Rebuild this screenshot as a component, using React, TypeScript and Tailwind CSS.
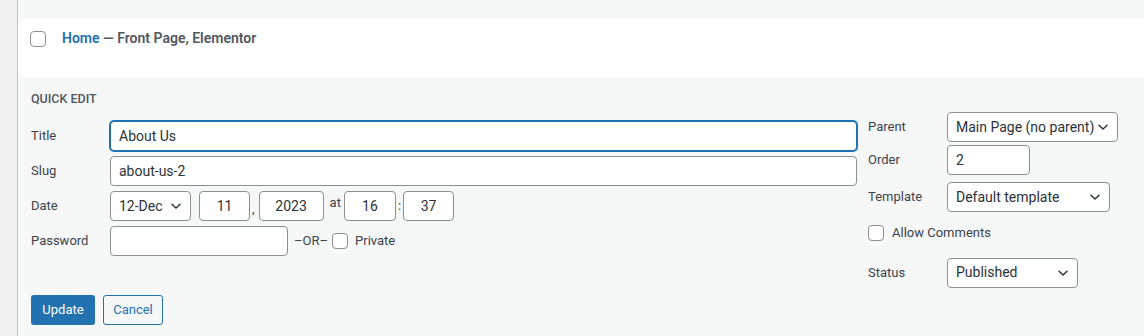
import React from "react";

const Chevron = () => (
  <svg width="12" height="12" viewBox="0 0 12 12" className="shrink-0">
    <path d="M2 4.2 L6 8 L10 4.2" fill="none" stroke="#2c3338" strokeWidth="1.5" strokeLinecap="round" strokeLinejoin="round" />
  </svg>
);

const Checkbox = () => (
  <span className="inline-block w-[16px] h-[16px] rounded-[4px] border border-[#8c8f94] bg-white shrink-0" />
);

const Select = ({ text, w }: { text: string; w: string }) => (
  <div className={`${w} h-[30px] flex items-center justify-between pl-[8px] pr-[8px] bg-white border border-[#8c8f94] rounded-[4px] text-[14px] text-[#2c3338]`}>
    <span className="whitespace-nowrap">{text}</span>
    <Chevron />
  </div>
);

const Input = ({ text, w, center, focus }: { text?: string; w: string; center?: boolean; focus?: boolean }) => (
  <div
    className={`${w} h-[30px] flex items-center px-[8px] bg-white rounded-[4px] text-[14px] text-[#2c3338] ${
      center ? "justify-center" : ""
    } ${focus ? "border border-[#2271b1] shadow-[0_0_0_1px_#2271b1]" : "border border-[#8c8f94]"}`}
  >
    {text}
  </div>
);

const Label = ({ children }: { children: React.ReactNode }) => (
  <div className="w-[79px] shrink-0 text-[13px] text-[#3c434a]">{children}</div>
);

export default function App() {
  return (
    <div
      className="flex w-[1144px] h-[336px] overflow-hidden bg-[#f6f7f7] text-[#3c434a]"
      style={{ fontFamily: '"Segoe UI", Roboto, "Noto Sans", sans-serif' }}
    >
      <div className="w-[18px] shrink-0 bg-[#f0f0f1] border-r border-[#c3c4c7]" />
      <div className="flex-1 flex flex-col">
        <div className="h-[19px] bg-[#f6f7f7]" />
        <div className="h-[58px] bg-white flex items-start pt-[11px]">
          <div className="ml-[12px]">
            <Checkbox />
          </div>
          <div className="ml-[16px] text-[14px] font-semibold leading-[16px] text-[#50575e]">
            <span className="text-[#2271b1]">Home</span> — Front Page, Elementor
          </div>
        </div>
        <div className="flex-1 flex flex-col pl-[13px] pt-[14px]">
          <div className="text-[12.5px] leading-[16px] font-medium text-[#50575e] uppercase">Quick Edit</div>
          <div className="flex items-start">
            <div className="w-[826px] mt-[14px] flex flex-col gap-[5px]">
              <div className="flex items-center">
                <Label>Title</Label>
                <Input text="About Us" w="flex-1" focus />
              </div>
              <div className="flex items-center">
                <Label>Slug</Label>
                <Input text="about-us-2" w="flex-1" />
              </div>
              <div className="flex items-center text-[13px]">
                <Label>Date</Label>
                <Select text="12-Dec" w="w-[81px]" />
                <div className="ml-[8px]">
                  <Input text="11" w="w-[51px]" center />
                </div>
                <span className="ml-[2px] mr-[4px] mt-[6px] text-[#3c434a]">,</span>
                <Input text="2023" w="w-[65px]" center />
                <span className="ml-[6px] mr-[3px] -mt-[6px] text-[#3c434a]">at</span>
                <Input text="16" w="w-[52px]" center />
                <span className="mx-[2px] text-[#3c434a]">:</span>
                <Input text="37" w="w-[51px]" center />
              </div>
              <div className="flex items-center text-[13px]">
                <Label>Password</Label>
                <Input w="w-[178px]" />
                <span className="ml-[6px] text-[#3c434a]">–OR–</span>
                <span className="ml-[4px] flex">
                  <Checkbox />
                </span>
                <span className="ml-[7px] text-[#3c434a]">Private</span>
              </div>
            </div>
            <div className="ml-[11px] mt-[5px] flex flex-col">
              <div className="flex items-center">
                <Label>Parent</Label>
                <Select text="Main Page (no parent)" w="w-[171px]" />
              </div>
              <div className="flex items-center mt-[3px]">
                <Label>Order</Label>
                <Input text="2" w="w-[83px]" />
              </div>
              <div className="flex items-center mt-[7px]">
                <Label>Template</Label>
                <Select text="Default template" w="w-[163px]" />
              </div>
              <div className="flex items-center mt-[11px] text-[13px]">
                <Checkbox />
                <span className="ml-[8px]">Allow Comments</span>
              </div>
              <div className="flex items-center mt-[15px]">
                <Label>Status</Label>
                <Select text="Published" w="w-[131px]" />
              </div>
            </div>
          </div>
          <div className="flex mt-[7px] gap-[8px]">
            <div className="w-[64px] h-[30px] rounded-[3px] bg-[#2271b1] text-white text-[13px] flex items-center justify-center">
              Update
            </div>
            <div className="w-[60px] h-[30px] rounded-[3px] border border-[#2271b1] text-[#2271b1] bg-[#f6f7f7] text-[13px] flex items-center justify-center">
              Cancel
            </div>
          </div>
        </div>
      </div>
    </div>
  );
}
